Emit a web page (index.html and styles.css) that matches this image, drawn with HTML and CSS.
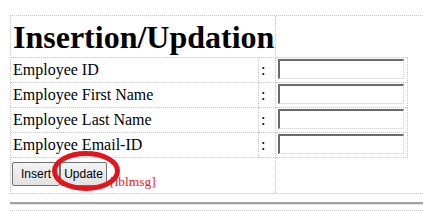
FILE: index.html
```html
<!DOCTYPE html>
<html>
<head>
<meta charset="utf-8">
<link rel="stylesheet" href="styles.css">
</head>
<body>
<div class="canvas">
  <div class="frame">
    <div class="form">
      <div class="cell title-cell"><h1 class="title">Insertion/Updation</h1></div>
      <div class="cell top-spacer"></div>

      <div class="cell label">Employee ID</div>
      <div class="cell colon">:</div>
      <div class="cell field"><input class="box" type="text"></div>

      <div class="cell label">Employee First Name</div>
      <div class="cell colon">:</div>
      <div class="cell field"><input class="box" type="text"></div>

      <div class="cell label">Employee Last Name</div>
      <div class="cell colon">:</div>
      <div class="cell field"><input class="box" type="text"></div>

      <div class="cell label">Employee Email-ID</div>
      <div class="cell colon">:</div>
      <div class="cell field"><input class="box" type="text"></div>

      <div class="cell actions">
        <button class="btn btn-insert" type="button">Insert</button>
        <button class="btn btn-update" type="button">Update</button>
        <span class="msg">[lblmsg]</span>
      </div>
      <div class="cell bottom-spacer"></div>
    </div>
  </div>
  <div class="rule"></div>
  <div class="tail"></div>
  <svg class="mark" width="76" height="48" viewBox="0 0 76 48" aria-hidden="true">
    <ellipse cx="37" cy="21" rx="31.5" ry="17.5" fill="none" stroke="#e3141b" stroke-width="5"/>
  </svg>
</div>
</body>
</html>
```

FILE: styles.css
```css
html, body {
  margin: 0;
  padding: 0;
  background: #ffffff;
}

body {
  width: 423px;
  height: 213px;
  overflow: hidden;
  font-family: "Liberation Serif", "Times New Roman", serif;
  font-size: 16px;
  color: #000;
}

.canvas {
  position: relative;
  padding: 15px 0 0 10px;
}

.frame {
  border-top: 1px dotted #c6c6c6;
  border-left: 1px dotted #c6c6c6;
  border-bottom: 1px dotted #c6c6c6;
}

.form {
  display: grid;
  grid-template-columns: 247px 18px 132px;
  grid-template-rows: 42px 25px 25px 25px 25px 35px;
}

.cell {
  box-sizing: border-box;
}

.title-cell {
  grid-column: 1 / span 2;
  border-right: 1px dotted #c6c6c6;
  border-bottom: 1px dotted #c6c6c6;
  padding: 3px 0 0 2px;
}

.title {
  margin: 0;
  font-size: 32px;
  line-height: 36px;
  font-weight: bold;
  white-space: nowrap;
}

.top-spacer {
  border-bottom: 1px dotted #c6c6c6;
}

.label {
  display: flex;
  align-items: center;
  padding: 0 0 1px 2px;
  border-bottom: 1px dotted #c6c6c6;
  line-height: 18px;
  white-space: nowrap;
}

.colon {
  display: flex;
  align-items: center;
  padding: 0 0 1px 2px;
  border-left: 1px dotted #c6c6c6;
  border-right: 1px dotted #c6c6c6;
  border-bottom: 1px dotted #c6c6c6;
  line-height: 18px;
}

.field {
  padding: 1px 0 0 2px;
  border-right: 1px dotted #c6c6c6;
  border-bottom: 1px dotted #c6c6c6;
}

.box {
  display: block;
  box-sizing: border-box;
  width: 126px;
  height: 20px;
  margin: 0;
  padding: 0;
  background: #fff;
  border-top: 2px solid #6b6b6b;
  border-left: 2px solid #6b6b6b;
  border-right: 1px solid #e2e2e2;
  border-bottom: 1px solid #e2e2e2;
  outline: none;
}

.actions {
  grid-column: 1 / span 2;
  display: flex;
  align-items: flex-start;
  padding: 4px 0 0 1px;
  border-right: 1px dotted #c6c6c6;
}

.btn {
  box-sizing: border-box;
  height: 24px;
  margin: 0;
  padding: 0;
  font-family: "Liberation Sans", Arial, sans-serif;
  font-size: 12px;
  color: #000;
  background: linear-gradient(#f4f4f4, #e2e2e2);
  border: 1px solid #707070;
  border-radius: 2px;
  text-align: center;
}

.btn-insert {
  width: 48px;
}

.btn-update {
  width: 47px;
}

.msg {
  margin: 12px 0 0 3px;
  font-size: 13.5px;
  color: #e21d1d;
  line-height: 16px;
  white-space: nowrap;
}

.rule {
  height: 2px;
  margin-top: 8px;
  background: #a3a3a3;
  border-bottom: 1px solid #e4e4e4;
}

.tail {
  margin-top: 5px;
  border-top: 1px dotted #c6c6c6;
}

.mark {
  position: absolute;
  left: 49px;
  top: 150px;
}
```
